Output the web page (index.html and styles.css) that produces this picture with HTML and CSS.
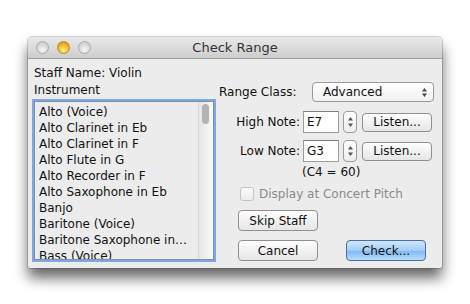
FILE: index.html
```html
<!DOCTYPE html>
<html lang="en">
<head>
    <meta charset="UTF-8">
    <title>Check Range</title>
    <link rel="stylesheet" href="styles.css">
</head>
<body>
    <div class="window">
        <div class="titlebar">
            <div class="lights">
                <span class="light"></span>
                <span class="light yellow"></span>
                <span class="light"></span>
            </div>
            <div class="title">Check Range</div>
        </div>
        <div class="content">
            <div class="left">
                <div class="line">Staff Name: Violin</div>
                <div class="line">Instrument</div>
                <div class="listbox">
                    <div class="items">
                        <div class="item">Alto (Voice)</div>
                        <div class="item">Alto Clarinet in Eb</div>
                        <div class="item">Alto Clarinet in F</div>
                        <div class="item">Alto Flute in G</div>
                        <div class="item">Alto Recorder in F</div>
                        <div class="item">Alto Saxophone in Eb</div>
                        <div class="item">Banjo</div>
                        <div class="item">Baritone (Voice)</div>
                        <div class="item">Baritone Saxophone in…</div>
                        <div class="item">Bass (Voice)</div>
                    </div>
                    <div class="scrollbar"><div class="thumb"></div></div>
                </div>
            </div>
            <div class="right">
                <div class="row range-row">
                    <span class="range-label">Range Class:</span>
                    <div class="popup">
                        <span>Advanced</span>
                        <svg width="7" height="11" viewBox="0 0 7 11"><path d="M3.5 1 L6 4.5 H1 Z M3.5 10 L6 6.5 H1 Z" fill="#444"/></svg>
                    </div>
                </div>
                <div class="row note-row">
                    <span class="note-label">High Note:</span>
                    <div class="field">E7</div>
                    <div class="stepper">
                        <svg width="7" height="18" viewBox="0 0 7 18"><path d="M3.5 4 L6 7.5 H1 Z M3.5 14 L6 10.5 H1 Z" fill="#555"/></svg>
                    </div>
                    <button class="btn listen">Listen...</button>
                </div>
                <div class="row note-row low">
                    <span class="note-label">Low Note:</span>
                    <div class="field">G3</div>
                    <div class="stepper">
                        <svg width="7" height="18" viewBox="0 0 7 18"><path d="M3.5 4 L6 7.5 H1 Z M3.5 14 L6 10.5 H1 Z" fill="#555"/></svg>
                    </div>
                    <button class="btn listen">Listen...</button>
                </div>
                <div class="hint">(C4 = 60)</div>
                <div class="row check-row">
                    <span class="checkbox"></span>
                    <span class="check-label">Display at Concert Pitch</span>
                </div>
                <button class="btn wide skip">Skip Staff</button>
                <div class="row bottom-row">
                    <button class="btn wide">Cancel</button>
                    <button class="btn wide default">Check...</button>
                </div>
            </div>
        </div>
    </div>
</body>
</html>
```

FILE: styles.css
```css
body {
    margin: 0;
    padding: 37px 0 0 28px;
    min-height: 304px;
    box-sizing: border-box;
    background: #fff;
    font-family: "DejaVu Sans", sans-serif;
    font-size: 12px;
    color: #111;
}
.window {
    width: 414px;
    height: 231px;
    background: #ececec;
    border-radius: 4px 4px 2px 2px;
    box-shadow: 0 10px 14px rgba(0,0,0,0.6), 0 0 0 1px rgba(0,0,0,0.16);
}
.titlebar {
    height: 21px;
    background: linear-gradient(#e9e9e9, #cdcdcd);
    border-bottom: 1px solid #9f9f9f;
    border-radius: 4px 4px 0 0;
    display: flex;
    align-items: center;
    padding: 0 8px;
}
.lights {
    display: flex;
    gap: 8px;
    width: 62px;
}
.light {
    width: 11px;
    height: 11px;
    border-radius: 50%;
    border: 1px solid #a9a9a9;
    background: radial-gradient(circle at 50% 70%, #f6f6f6, #d0d0d0 70%);
    box-sizing: content-box;
}
.light.yellow {
    border-color: #c28a22;
    background: radial-gradient(circle at 50% 75%, #fff27a, #f2b42c 55%, #c9860f);
}
.title {
    flex: 1;
    text-align: center;
    margin-right: 62px;
    font-size: 13px;
    color: #333;
}
.content {
    display: flex;
    height: 209px;
}
.left {
    width: 184px;
    padding: 6px 0 0 4px;
}
.line {
    height: 17px;
    line-height: 17px;
    padding-left: 2px;
}
.listbox {
    margin-top: 2px;
    height: 157px;
    border: 1px solid #7c8fb0;
    box-shadow: 0 0 0 2px #7fa8e3;
    margin-left: 2px;
    margin-right: 2px;
    display: flex;
    background: #ececec;
    overflow: hidden;
}
.items {
    flex: 1;
    padding: 2px 0 0 4px;
    overflow: hidden;
}
.item {
    height: 16px;
    line-height: 16px;
    white-space: nowrap;
}
.scrollbar {
    width: 14px;
    background: linear-gradient(90deg, #e6e6e6, #fafafa);
    border-left: 1px solid #d6d6d6;
    padding-top: 2px;
}
.thumb {
    width: 7px;
    height: 20px;
    margin-left: 3px;
    border-radius: 4px;
    background: #b3b3b3;
}
.right {
    flex: 1;
    padding: 23px 0 0 3px;
    display: flex;
    flex-direction: column;
}
.row {
    display: flex;
    align-items: center;
}
.range-row {
    height: 20px;
}
.range-label {
    width: 93px;
}
.popup {
    width: 122px;
    height: 20px;
    box-sizing: border-box;
    border: 1px solid #999;
    border-radius: 4px;
    background: linear-gradient(#fff, #f0f0f0);
    display: flex;
    align-items: center;
    justify-content: space-between;
    padding: 0 5px 0 10px;
}
.note-row {
    height: 22px;
    margin-top: 9px;
}
.note-row.low {
    margin-top: 7px;
}
.note-label {
    width: 84px;
    text-align: right;
    padding-right: 3px;
    box-sizing: border-box;
}
.field {
    width: 36px;
    height: 22px;
    box-sizing: border-box;
    background: #fff;
    border: 1px solid #9c9c9c;
    border-top-color: #7f7f7f;
    padding: 3px 0 0 3px;
}
.stepper {
    width: 14px;
    height: 22px;
    margin-left: 4px;
    box-sizing: border-box;
    border: 1px solid #9c9c9c;
    border-radius: 4px;
    background: linear-gradient(#fff, #ededed);
    display: flex;
    align-items: center;
    justify-content: center;
}
.btn {
    font-family: "DejaVu Sans", sans-serif;
    font-size: 12px;
    color: #111;
    height: 20px;
    padding: 0;
    border: 1px solid #8f8f8f;
    border-radius: 4px;
    background: linear-gradient(#ffffff, #f1f1f1 50%, #e6e6e6);
}
.listen {
    width: 70px;
    height: 19px;
    margin-left: 5px;
}
.hint {
    margin-top: 3px;
    margin-left: 83px;
    height: 14px;
    line-height: 14px;
}
.check-row {
    margin-top: 8px;
    height: 14px;
    padding-left: 21px;
}
.checkbox {
    width: 12px;
    height: 12px;
    border: 1px solid #c4c4c4;
    border-radius: 3px;
    background: linear-gradient(#fbfbfb, #ececec);
    margin-right: 5px;
}
.check-label {
    color: #8a8a8a;
}
.wide {
    width: 80px;
    height: 21px;
}
.skip {
    margin-top: 9px;
    margin-left: 19px;
}
.bottom-row {
    margin-top: 9px;
    padding-left: 19px;
    gap: 28px;
}
.default {
    border-color: #4a6da3;
    background: linear-gradient(#cfe6fc, #a3cdf6 50%, #7fb8f2 51%, #b7dcfb);
}
```
